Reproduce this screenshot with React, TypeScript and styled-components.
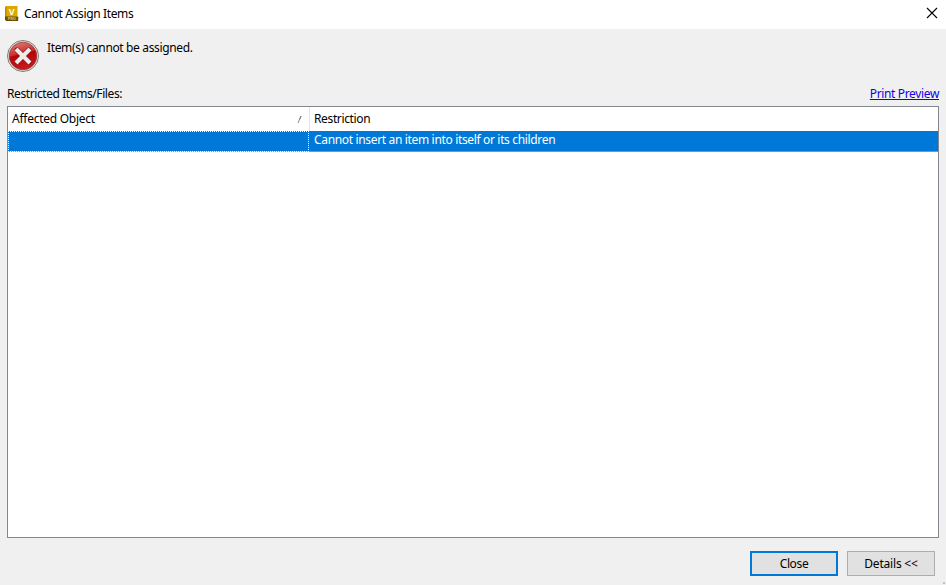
import React from 'react';
import styled, { createGlobalStyle } from 'styled-components';

const GlobalStyle = createGlobalStyle`
  * { box-sizing: border-box; }
  body { margin: 0; background: #f0f0f0; }
`;

const Dialog = styled.main`
  width: 946px;
  height: 585px;
  display: flex;
  flex-direction: column;
  position: relative;
  background: #f0f0f0;
  color: #000;
  font: 12px/16px "Noto Sans", "Open Sans", sans-serif;
  overflow: hidden;
`;

const TitleBar = styled.header`
  flex: none;
  height: 29px;
  display: flex;
  align-items: center;
  padding: 0 8px 2px 4px;
  background: #fff;
`;

const Label = styled.span<{ $spacing?: number }>`
  white-space: pre;
  letter-spacing: ${(p) => p.$spacing ?? -0.36}px;
`;

const Title = styled.h1`
  flex: 1;
  margin: 0 0 0 5px;
  font: inherit;
`;

const IconButton = styled.button`
  display: flex;
  padding: 0;
  margin-top: -1px;
  border: 0;
  background: none;
`;

const Message = styled.section`
  flex: none;
  height: 57px;
  display: flex;
  align-items: flex-start;
  gap: 7px;
  padding: 11px 0 0 7px;
`;

const ListHeading = styled.div`
  flex: none;
  height: 20px;
  display: flex;
  justify-content: space-between;
  padding: 0 7px;
`;

const PreviewLink = styled.a`
  color: #1400e6;
  text-decoration: underline;
  text-underline-offset: 1px;
`;

const Table = styled.div`
  flex: none;
  height: 432px;
  margin: 0 7px;
  border: 1px solid #828790;
  background: #fff;
`;

const Row = styled.div<{ $selected?: boolean }>`
  display: grid;
  grid-template-columns: 301px 1fr;
  height: ${(p) => (p.$selected ? 21 : 24)}px;
  background: ${(p) => (p.$selected ? '#0078d7' : '#fff')};
  color: ${(p) => (p.$selected ? '#fff' : '#000')};
  border-bottom: ${(p) => (p.$selected ? '1px solid #5a9fd8' : '0')};
`;

const HeaderCell = styled.div`
  display: flex;
  align-items: center;
  justify-content: space-between;
  padding: 0 5px 0 4px;
  & + & { border-left: 1px solid #e5e5e5; }
`;

const Cell = styled.div<{ $focused?: boolean }>`
  height: ${(p) => (p.$focused ? 21 : 20)}px;
  padding: 1px 5px;
  border: ${(p) => (p.$focused ? '1px dotted #fff' : '0')};
`;

const Footer = styled.footer`
  display: flex;
  justify-content: flex-end;
  gap: 9px;
  padding: 13px 11px 0 0;
`;

const Button = styled.button<{ $primary?: boolean }>`
  width: 88px;
  height: 25px;
  display: flex;
  align-items: center;
  justify-content: center;
  padding: 0;
  border: ${(p) => (p.$primary ? '2px solid #0078d7' : '1px solid #adadad')};
  background: #e1e1e1;
  color: #000;
  font: inherit;
`;

const Grip = styled.i`
  position: absolute;
  right: 1px;
  bottom: 1px;
  width: 2px;
  height: 2px;
  background: #bfbfbf;
`;

const IconText = styled.text`
  font-family: "Open Sans", sans-serif;
  font-weight: 700;
  text-anchor: middle;
`;

const VaultIcon = () => (
  <svg width="15" height="17" viewBox="0 0 15 17">
    <path d="M1 2.2 2.3 1H13.5V12H1Z" fill="#dda900" />
    <path d="M1 2.2 2.3 1V12H1Z" fill="#b98700" />
    <path d="M1 11.5H13.5L14.2 12.3V16H2.2L1 14.8Z" fill="#705000" />
    <IconText x="7.6" y="9.6" fontSize="9" fill="#fffbe0">V</IconText>
    <IconText x="7.8" y="15.3" fontSize="4" fill="#d9c488">PRO</IconText>
  </svg>
);

const ErrorIcon = () => (
  <svg width="33" height="33" viewBox="0 0 33 33">
    <defs>
      <linearGradient id="red" x1="0" y1="0" x2=".25" y2="1">
        <stop offset="0" stopColor="#dc8580" />
        <stop offset=".48" stopColor="#c9302e" />
        <stop offset=".52" stopColor="#b50509" />
        <stop offset="1" stopColor="#c5191d" />
      </linearGradient>
    </defs>
    <circle cx="16" cy="16" r="15.5" fill="#e7e5e3" stroke="#807c79" />
    <circle cx="16" cy="16" r="13.8" fill="url(#red)" stroke="#9d3834" strokeWidth=".8" />
    <path d="m10.2 10.2 11.6 11.6m0-11.6L10.2 21.8" stroke="#930d10" strokeWidth="5.4" strokeLinecap="round" />
    <path d="m10.5 10.5 11 11m0-11-11 11" stroke="#eeeceb" strokeWidth="4.2" strokeLinecap="square" />
  </svg>
);

export default function App() {
  return (
    <Dialog>
      <GlobalStyle />
      <TitleBar>
        <VaultIcon />
        <Title><Label>Cannot Assign Items</Label></Title>
        <IconButton aria-label="Close window">
          <svg width="12" height="12" viewBox="0 0 12 12">
            <path d="m1 1 10 10M11 1 1 11" stroke="#000" strokeWidth="1.1" />
          </svg>
        </IconButton>
      </TitleBar>
      <Message>
        <ErrorIcon />
        <Label>Item(s) cannot be assigned.</Label>
      </Message>
      <ListHeading>
        <Label $spacing={-0.41}>Restricted Items/Files:</Label>
        <PreviewLink><Label>Print Preview</Label></PreviewLink>
      </ListHeading>
      <Table>
        <Row>
          <HeaderCell>
            <Label $spacing={-0.26}>Affected Object</Label>
            <svg width="8" height="9" viewBox="0 0 8 9">
              <path d="M2 8 5 1M3.7 4.5 5 1" stroke="#777" strokeWidth=".9" />
            </svg>
          </HeaderCell>
          <HeaderCell><Label>Restriction</Label></HeaderCell>
        </Row>
        <Row $selected>
          <Cell $focused />
          <Cell><Label $spacing={-0.34}>Cannot insert an item into itself or its children</Label></Cell>
        </Row>
      </Table>
      <Footer>
        <Button $primary><Label>Close</Label></Button>
        <Button><Label $spacing={-0.2}>Details &lt;&lt;</Label></Button>
      </Footer>
      <Grip />
    </Dialog>
  );
}
